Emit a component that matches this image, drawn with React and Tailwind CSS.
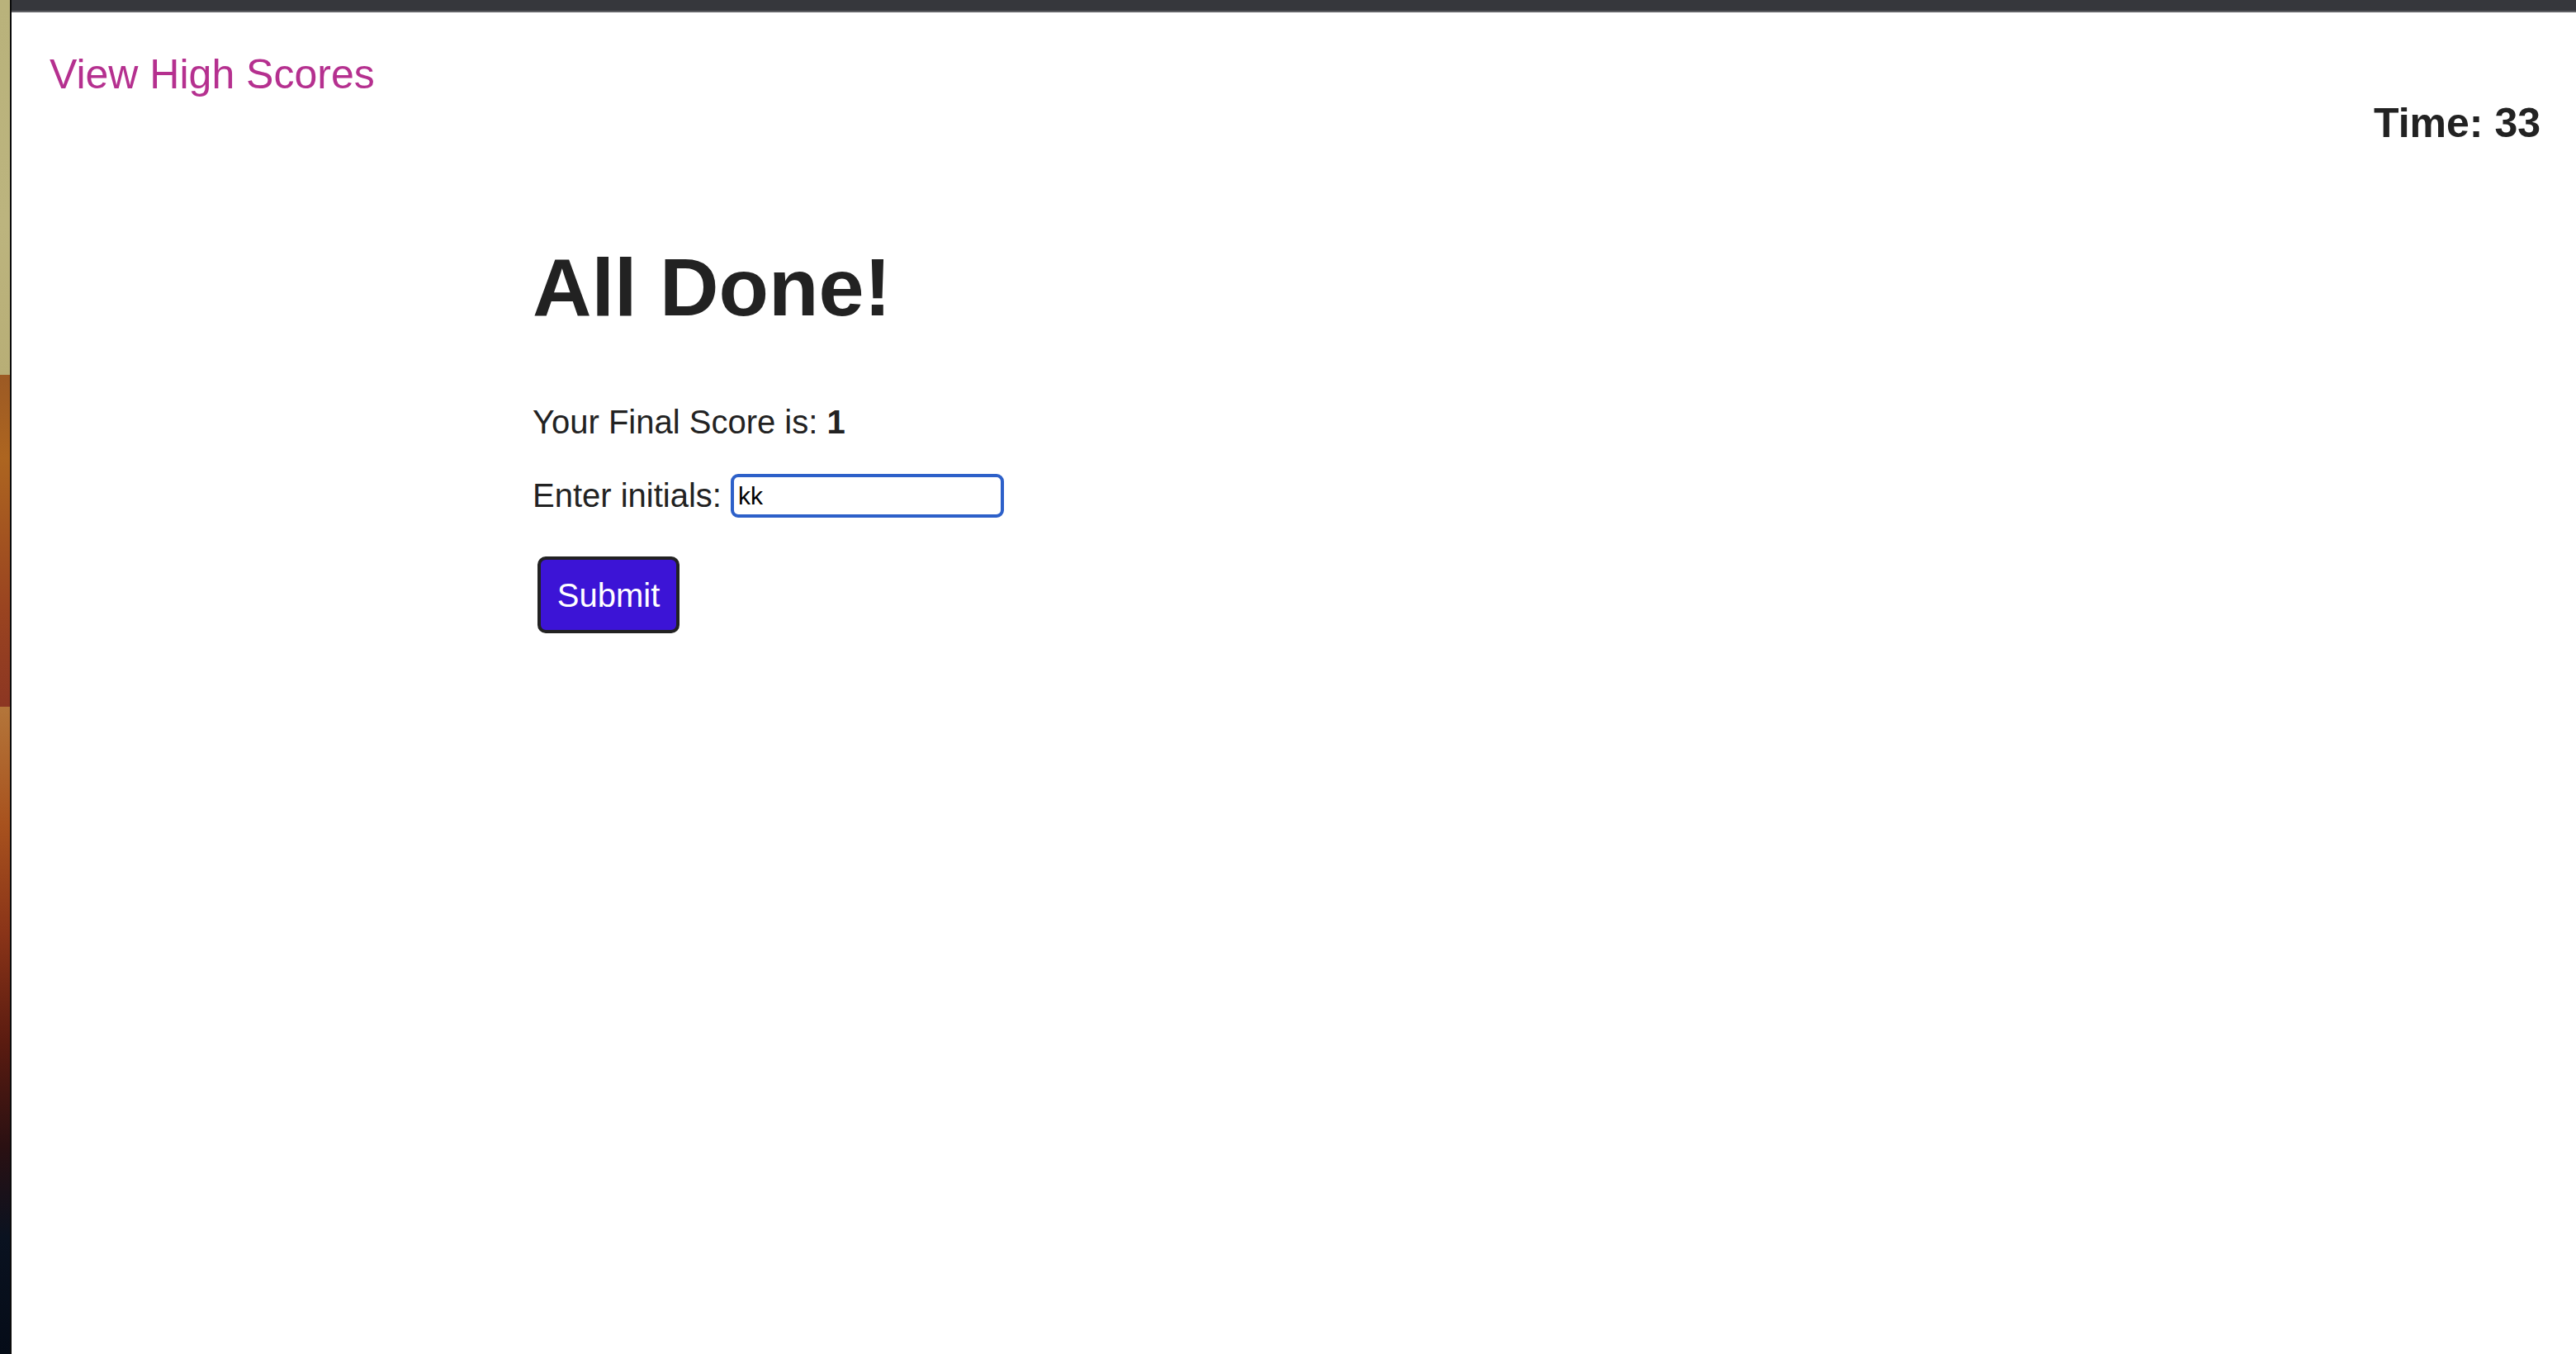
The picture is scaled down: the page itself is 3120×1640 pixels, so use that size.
export default function App() {
  return (
    <div
      className="flex h-[1640px] w-[3120px] overflow-hidden bg-white text-[#222222]"
      style={{ fontFamily: '"Liberation Sans", Arial, Helvetica, sans-serif' }}
    >
      <div className="flex h-full w-[14px] shrink-0 flex-col border-r-[2px] border-[#0b0b0b]">
        <div className="h-[454px] bg-[linear-gradient(to_bottom,#b9b27b,#bcb47e_60%,#b8ae76)]" />
        <div className="h-[402px] bg-[linear-gradient(to_bottom,#9c5a24,#ad6520_25%,#9a4420_70%,#8c3622)]" />
        <div className="flex-1 bg-[linear-gradient(to_bottom,#b4763a,#a8521e_18%,#8a3418_35%,#5a1b10_52%,#2a1012_68%,#0a1220_82%,#050c18)]" />
      </div>
      <div className="flex min-w-0 flex-1 flex-col">
        <div className="h-[13px] w-full shrink-0 bg-[#36373c]" />
        <div className="h-[2px] w-full shrink-0 bg-[#5f6064]" />
        <div className="flex items-start justify-between">
          <a className="pl-[46px] pt-[45px] text-[50px] leading-[60px] text-[#b5308f]" href="#">
            View High Scores
          </a>
          <div className="pr-[43px] pt-[104px] text-[50px] font-bold leading-[60px]">Time: 33</div>
        </div>
        <div className="flex flex-col items-start pl-[631px]">
          <h1 className="mt-[114px] text-[99px] font-bold leading-[110px]">All Done!</h1>
          <p className="mt-[84px] text-[40px] leading-[48px]">
            Your Final Score is: <span className="font-bold">1</span>
          </p>
          <div className="mt-[39px] flex items-start gap-[11px]">
            <label className="mt-[2px] text-[40px] leading-[48px]">Enter initials:</label>
            <input
              className="h-[53px] w-[331px] rounded-[9px] border-[4px] border-[#2d60c9] bg-white pl-[5px] text-[30px] text-black outline-none"
              defaultValue="kk"
              style={{ fontFamily: '"Liberation Sans", Arial, sans-serif' }}
            />
          </div>
          <button className="ml-[6px] mt-[47px] flex h-[93px] w-[172px] items-center justify-center rounded-[10px] border-[4px] border-[#222222] bg-[#3c14d6] text-[40px] text-white">
            Submit
          </button>
        </div>
      </div>
    </div>
  );
}
